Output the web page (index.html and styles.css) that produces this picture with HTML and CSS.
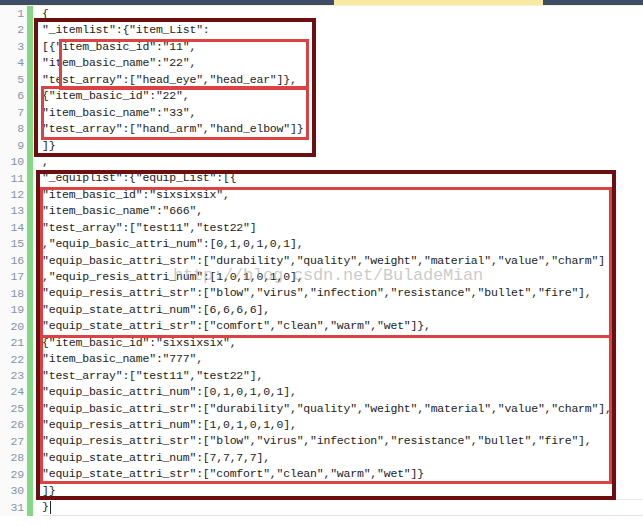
FILE: index.html
```html
<!DOCTYPE html>
<html lang="en">
<head>
    <meta charset="UTF-8">
    <meta name="viewport" content="width=device-width, initial-scale=1.0">
    <title>item_list.json</title>
    <link rel="stylesheet" href="styles.css">
</head>
<body>
    <div class="editor">
        <div class="tabs">
            <div class="tab"></div>
            <div class="tab active"></div>
            <div class="tab rest"></div>
        </div>
        <div class="body">
            <div class="gutter">
                <div>1</div><div>2</div><div>3</div><div>4</div><div>5</div>
                <div>6</div><div>7</div><div>8</div><div>9</div><div>10</div>
                <div>11</div><div>12</div><div>13</div><div>14</div><div>15</div>
                <div>16</div><div>17</div><div>18</div><div>19</div><div>20</div>
                <div>21</div><div>22</div><div>23</div><div>24</div><div>25</div>
                <div>26</div><div>27</div><div>28</div><div>29</div><div>30</div>
                <div>31</div>
            </div>
            <div class="fold"></div>
            <div class="code">
                <div class="line">{</div>
                <div class="line">"_itemlist":{"item_List":</div>
                <div class="line">[{"item_basic_id":"11",</div>
                <div class="line">"item_basic_name":"22",</div>
                <div class="line">"test_array":["head_eye","head_ear"]},</div>
                <div class="line">{"item_basic_id":"22",</div>
                <div class="line">"item_basic_name":"33",</div>
                <div class="line">"test_array":["hand_arm","hand_elbow"]}</div>
                <div class="line">]}</div>
                <div class="line">,</div>
                <div class="line">"_equiplist":{"equip_List":[{</div>
                <div class="line">"item_basic_id":"sixsixsix",</div>
                <div class="line">"item_basic_name":"666",</div>
                <div class="line">"test_array":["test11","test22"]</div>
                <div class="line">,"equip_basic_attri_num":[0,1,0,1,0,1],</div>
                <div class="line">"equip_basic_attri_str":["durability","quality","weight","material","value","charm"]</div>
                <div class="line">,"equip_resis_attri_num":[1,0,1,0,1,0],</div>
                <div class="line">"equip_resis_attri_str":["blow","virus","infection","resistance","bullet","fire"],</div>
                <div class="line">"equip_state_attri_num":[6,6,6,6],</div>
                <div class="line">"equip_state_attri_str":["comfort","clean","warm","wet"]},</div>
                <div class="line">{"item_basic_id":"sixsixsix",</div>
                <div class="line">"item_basic_name":"777",</div>
                <div class="line">"test_array":["test11","test22"],</div>
                <div class="line">"equip_basic_attri_num":[0,1,0,1,0,1],</div>
                <div class="line">"equip_basic_attri_str":["durability","quality","weight","material","value","charm"],</div>
                <div class="line">"equip_resis_attri_num":[1,0,1,0,1,0],</div>
                <div class="line">"equip_resis_attri_str":["blow","virus","infection","resistance","bullet","fire"],</div>
                <div class="line">"equip_state_attri_num":[7,7,7,7],</div>
                <div class="line">"equip_state_attri_str":["comfort","clean","warm","wet"]}</div>
                <div class="line">]}</div>
                <div class="line current">}<span class="caret"></span></div>
            </div>

            <!-- annotation boxes drawn over the code -->
            <div class="mark outer mark-itemlist"></div>
            <div class="mark inner mark-item-a"></div>
            <div class="mark inner mark-item-b"></div>
            <div class="mark outer mark-equiplist"></div>
            <div class="mark inner mark-equip-a"></div>
            <div class="mark inner mark-equip-b"></div>

            <div class="watermark">http://blog.csdn.net/BuladeMian</div>
        </div>
    </div>
</body>
</html>
```

FILE: styles.css
```css
body {
    margin: 0;
    background-color: #fff;
}

.editor {
    width: 643px;
    height: 527px;
    overflow: hidden;
    background-color: #fff;
}

.tabs {
    display: flex;
    height: 5px;
    background-color: #3e4d66;
    border-bottom: 1px solid #f6f1d6;
}

.tab {
    flex: 0 0 334px;
}

.tab.active {
    flex: 0 0 209px;
    background-color: #f8eaa2;
}

.tab.rest {
    flex: 1;
}

.body {
    position: relative;
    display: flex;
    align-items: flex-start;
    font-family: "Liberation Mono", "DejaVu Sans Mono", monospace;
    font-size: 11.5px;
    letter-spacing: -0.2px;
    line-height: 16.45px;
}

.gutter {
    width: 24px;
    padding-right: 3px;
    text-align: right;
    color: #7f95ad;
    background-color: #fafafa;
}

.fold {
    width: 6px;
    height: 510px;
    background-color: #84d884;
}

.code {
    flex: 1;
    padding-left: 9px;
    color: #1c1c1c;
}

.line {
    height: 16.45px;
    white-space: pre;
}

.line.current {
    box-sizing: border-box;
    border-top: 1px solid #e8e8e8;
    border-bottom: 1px solid #e4e4e4;
    line-height: 14.45px;
}

.caret {
    display: inline-block;
    width: 1px;
    height: 13px;
    margin-left: 1px;
    vertical-align: middle;
    background-color: #222;
}

/* red frames painted on top of the screenshot */
.mark {
    position: absolute;
    box-sizing: border-box;
}

.mark.outer {
    border: 4px solid #6d0f10;
}

.mark.inner {
    border: 3px solid #dc4242;
}

.mark-itemlist {
    left: 34px;
    top: 12px;
    width: 282px;
    height: 139px;
}

.mark-item-a {
    left: 59px;
    top: 33px;
    width: 250px;
    height: 51px;
}

.mark-item-b {
    left: 41px;
    top: 80px;
    width: 268px;
    height: 54px;
}

.mark-equiplist {
    left: 36px;
    top: 164px;
    width: 580px;
    height: 330px;
}

.mark-equip-a {
    left: 40px;
    top: 181px;
    width: 572px;
    height: 151px;
}

.mark-equip-b {
    left: 40px;
    top: 329px;
    width: 572px;
    height: 149px;
}

.watermark {
    position: absolute;
    left: 173px;
    top: 261px;
    font-family: "Liberation Mono", monospace;
    font-size: 17px;
    line-height: 17px;
    letter-spacing: -0.2px;
    color: rgba(150, 150, 150, 0.5);
    white-space: nowrap;
}
```
